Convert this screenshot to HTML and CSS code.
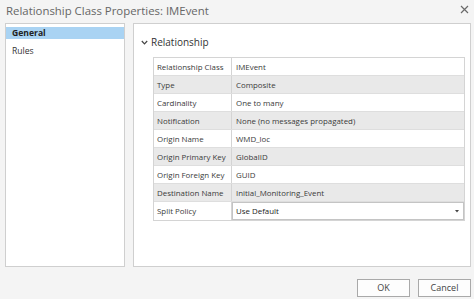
FILE: index.html
```html
<!DOCTYPE html>
<html>
<head>
<meta charset="utf-8">
<link rel="stylesheet" href="styles.css">
</head>
<body>
<div class="dialog">
  <div class="titlebar">
    <span class="title">Relationship Class Properties: IMEvent</span>
    <svg class="close" width="9" height="9" viewBox="0 0 9 9"><path d="M1 1L8 8M8 1L1 8" stroke="#6a6a6a" stroke-width="1.2" fill="none"/></svg>
  </div>
  <div class="main">
    <div class="nav">
      <div class="nav-item selected">General</div>
      <div class="nav-item">Rules</div>
    </div>
    <div class="content">
      <div class="section-head">
        <svg class="chev" width="7" height="5" viewBox="0 0 7 5"><path d="M0.8 1L3.5 3.8L6.2 1" stroke="#444" stroke-width="1.2" fill="none"/></svg>
        <span>Relationship</span>
      </div>
      <div class="table">
        <div class="row"><div class="k">Relationship Class</div><div class="v">IMEvent</div></div>
        <div class="row alt"><div class="k">Type</div><div class="v">Composite</div></div>
        <div class="row"><div class="k">Cardinality</div><div class="v">One to many</div></div>
        <div class="row alt"><div class="k">Notification</div><div class="v">None (no messages propagated)</div></div>
        <div class="row"><div class="k">Origin Name</div><div class="v">WMD_loc</div></div>
        <div class="row alt"><div class="k">Origin Primary Key</div><div class="v">GlobalID</div></div>
        <div class="row"><div class="k">Origin Foreign Key</div><div class="v">GUID</div></div>
        <div class="row alt"><div class="k">Destination Name</div><div class="v">Initial_Monitoring_Event</div></div>
        <div class="row last"><div class="k">Split Policy</div><div class="v combo-cell"><div class="combo"><span>Use Default</span><svg class="arrow" width="4" height="3" viewBox="0 0 4 3"><path d="M0 0H4L2 2.5Z" fill="#444"/></svg></div></div></div>
      </div>
    </div>
  </div>
  <div class="footer">
    <div class="btn">OK</div>
    <div class="btn">Cancel</div>
  </div>
</div>
</body>
</html>
```
FILE: styles.css
```css
html, body {
  margin: 0;
  padding: 0;
}
body {
  width: 474px;
  height: 299px;
  overflow: hidden;
  background: #f4f4f4;
  font-family: "Open Sans", "Noto Sans", sans-serif;
}
.dialog {
  width: 474px;
  height: 299px;
  display: flex;
  flex-direction: column;
  background: #f4f4f4;
}
.titlebar {
  height: 23px;
  display: flex;
  align-items: center;
  justify-content: space-between;
  padding: 0 5px 0 6px;
  box-sizing: border-box;
}
.title {
  font-size: 11.4px;
  color: #666;
  margin-top: -2px;
}
.close {
  margin-top: -4px;
}
.main {
  display: flex;
  height: 244px;
  padding-left: 5px;
  gap: 8px;
}
.nav {
  width: 118px;
  background: #fff;
  border: 1px solid #cfcfcf;
  padding-top: 3px;
}
.nav-item {
  height: 16px;
  line-height: 16px;
  font-size: 8.6px;
  color: #333;
  padding-left: 6px;
}
.nav-item.selected {
  background: #a9d3f3;
  font-weight: bold;
  color: #222;
  height: 12px;
  line-height: 12px;
  margin-bottom: 4px;
}
.content {
  width: 336px;
  background: #fff;
  border: 1px solid #cfcfcf;
}
.section-head {
  display: flex;
  align-items: center;
  height: 18px;
  margin-top: 9px;
  padding-left: 7px;
  font-size: 10px;
  color: #333;
}
.chev {
  margin-right: 3px;
}
.table {
  margin: 6px 0 0 19px;
  width: 310px;
  border: 1px solid #d4d4d4;
}
.row {
  display: flex;
  height: 17px;
  border-bottom: 1px solid #dedede;
  font-size: 7.9px;
  color: #3a3a3a;
}
.row.last {
  border-bottom: none;
  height: 18px;
}
.row.alt {
  background: #e9e9e9;
}
.k {
  width: 74px;
  padding-left: 3px;
  border-right: 1px solid #d4d4d4;
  display: flex;
  align-items: center;
  white-space: nowrap;
}
.v {
  flex: 1;
  padding-left: 4px;
  display: flex;
  align-items: center;
  white-space: nowrap;
}
.combo-cell {
  padding: 0;
  align-items: stretch;
}
.combo {
  flex: 1;
  display: flex;
  align-items: center;
  justify-content: space-between;
  border: 1px solid #c4c4c4;
  background: #fff;
  padding: 0 4px 0 3px;
  color: #222;
}
.footer {
  flex: 1;
  display: flex;
  justify-content: flex-end;
  align-items: flex-start;
  gap: 8px;
  padding: 12px 3px 0 0;
}
.btn {
  width: 51px;
  height: 16px;
  line-height: 16px;
  text-align: center;
  font-size: 9px;
  color: #444;
  background: #fdfdfd;
  border: 1px solid #a9a9a9;
}
```
